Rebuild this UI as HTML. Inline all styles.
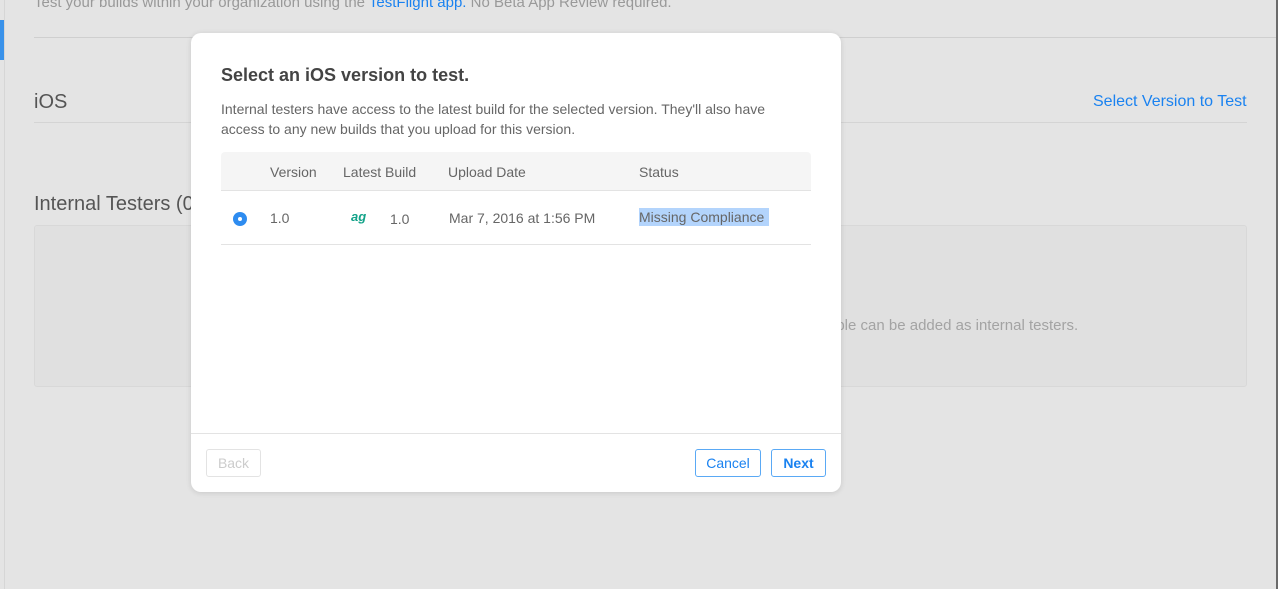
<!DOCTYPE html>
<html><head><meta charset="utf-8"><style>
*{margin:0;padding:0;box-sizing:border-box}
body{width:1278px;height:589px;background:#e4e4e4;font-family:"Liberation Sans",sans-serif;position:relative;overflow:hidden;color:#555}
.a{position:absolute}
.modal{left:191px;top:33px;width:650px;height:459px;background:#fff;border-radius:10px;box-shadow:0 1px 6px rgba(0,0,0,.12)}
.btn{position:absolute;top:416px;height:28px;border:1px solid #5aa9f5;border-radius:3px;font-size:14px;line-height:26px;text-align:center;color:#1a82f0}
</style></head><body>
<div class="a" style="left:0;top:20px;width:4px;height:40px;background:#3a92ea"></div>
<div class="a" style="left:4px;top:0;width:1px;height:589px;background:#d6d6d6"></div>
<div class="a" style="left:1276px;top:0;width:2px;height:589px;background:#6a6a6a"></div>
<div class="a" style="left:34px;top:-6px;font-size:15px;color:#999">Test your builds within your organization using the <span style="color:#1a82f0">TestFlight app.</span> No Beta App Review required.</div>
<div class="a" style="left:34px;top:37px;width:1242px;height:1px;background:#cfcfcf"></div>
<div class="a" style="left:34px;top:91px;font-size:20px;color:#555">iOS</div>
<div class="a" style="left:1093px;top:93px;font-size:16px;color:#1a82f0">Select Version to Test</div>
<div class="a" style="left:34px;top:122px;width:1213px;height:1px;background:#d4d4d4"></div>
<div class="a" style="left:34px;top:193px;font-size:20px;color:#555">Internal Testers (0)</div>
<div class="a" style="left:34px;top:225px;width:1213px;height:162px;background:#e0e0e0;border:1px solid #d8d8d8;border-radius:3px"></div>
<div class="a" style="left:828px;top:317px;font-size:15px;color:#a3a3a3">ople can be added as internal testers.</div>
<div class="a modal">
 <div class="a" style="left:30px;top:32px;font-size:18px;font-weight:bold;color:#444">Select an iOS version to test.</div>
 <div class="a" style="left:30px;top:66px;width:590px;font-size:14px;line-height:20px;color:#666">Internal testers have access to the latest build for the selected version. They'll also have access to any new builds that you upload for this version.</div>
 <div class="a" style="left:30px;top:119px;width:590px;height:39px;background:#f5f5f5;border-bottom:1px solid #e3e3e3;border-radius:4px 4px 0 0"></div>
 <div class="a" style="top:131px;left:79px;font-size:14px;color:#666">Version</div>
 <div class="a" style="top:131px;left:152px;font-size:14px;color:#666">Latest Build</div>
 <div class="a" style="top:131px;left:257px;font-size:14px;color:#666">Upload Date</div>
 <div class="a" style="top:131px;left:448px;font-size:14px;color:#666">Status</div>
 <div class="a" style="left:42px;top:179px;width:14px;height:14px;border-radius:50%;background:#2e8cf0"><div class="a" style="left:5px;top:5px;width:4px;height:4px;border-radius:50%;background:#fff"></div></div>
 <div class="a" style="top:177px;left:79px;font-size:14px;color:#666">1.0</div>
 <div class="a" style="top:176px;left:160px;font-size:13px;font-weight:bold;font-style:italic;color:#13a389">ag</div>
 <div class="a" style="top:178px;left:199px;font-size:14px;color:#666">1.0</div>
 <div class="a" style="top:177px;left:258px;font-size:14px;color:#666">Mar 7, 2016 at 1:56 PM</div>
 <div class="a" style="top:175px;left:448px;font-size:14px;line-height:18px;color:#666;background:#b3d4fc;padding-right:5px">Missing Compliance</div>
 <div class="a" style="left:30px;top:211px;width:590px;height:1px;background:#e3e3e3"></div>
 <div class="a" style="left:0;top:400px;width:650px;height:1px;background:#e3e3e3"></div>
 <div class="btn" style="left:15px;width:55px;border-color:#e3e3e3;color:#ccc">Back</div>
 <div class="btn" style="left:504px;width:66px">Cancel</div>
 <div class="btn" style="left:580px;width:55px;font-weight:bold">Next</div>
</div>
</body></html>
